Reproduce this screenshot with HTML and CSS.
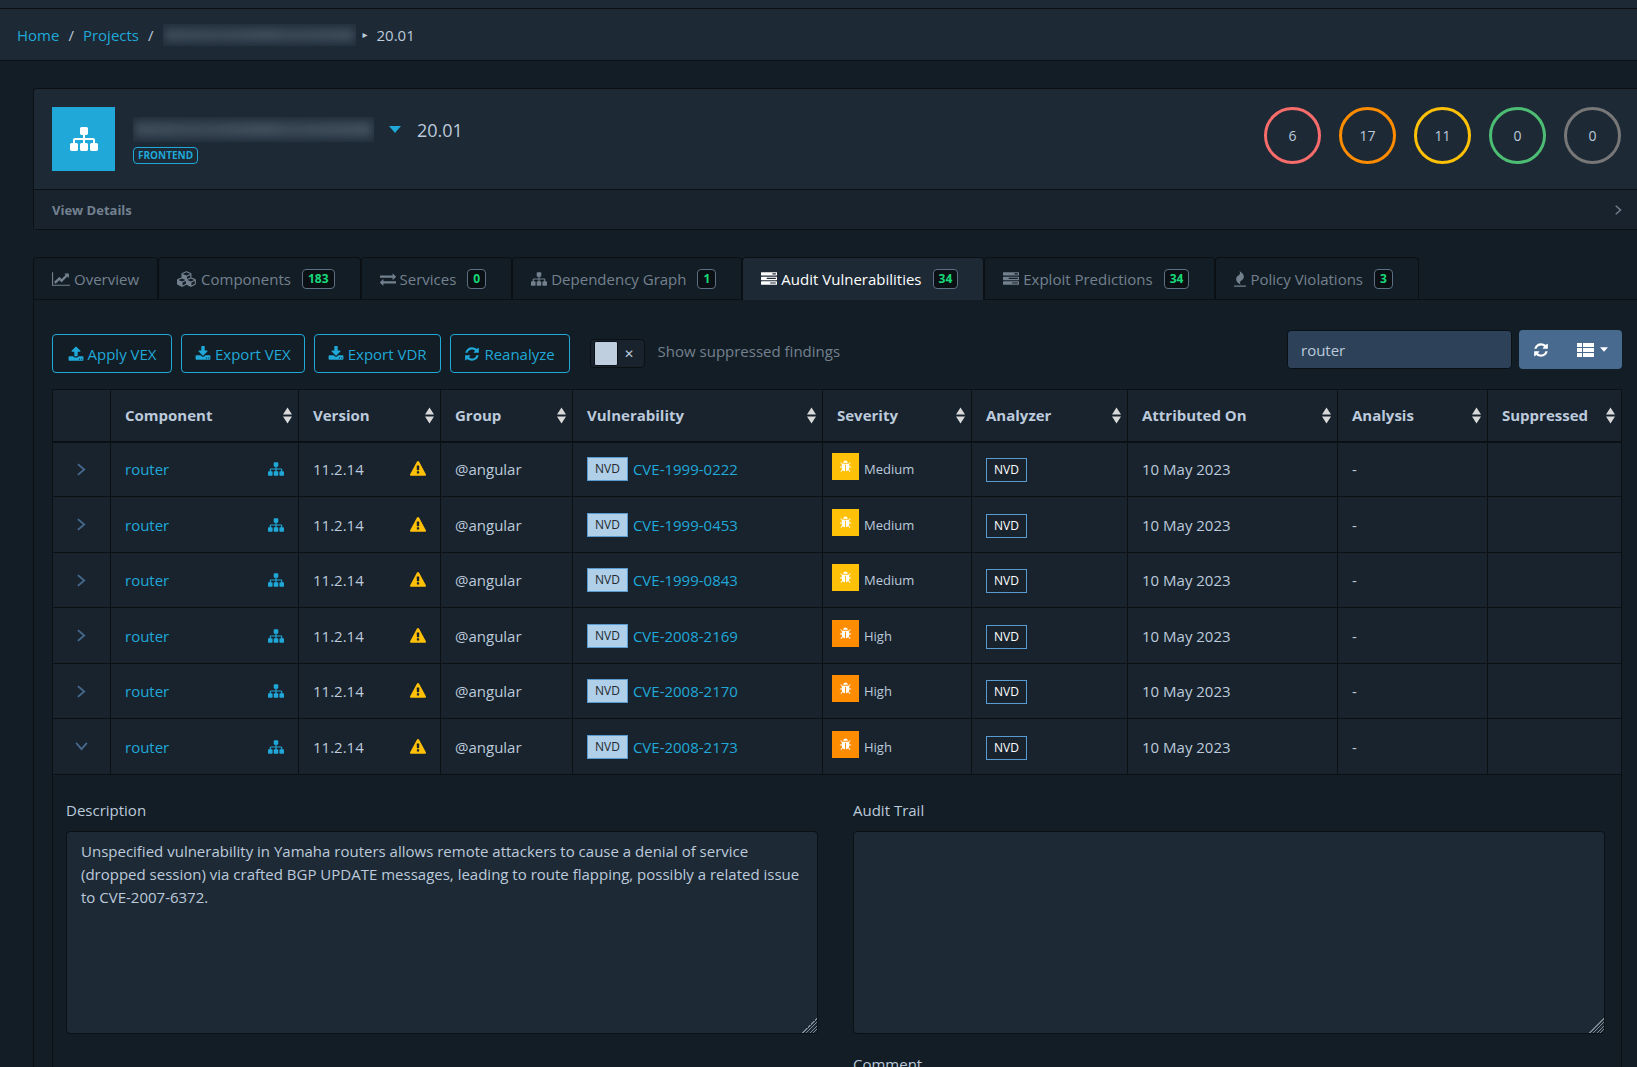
FILE: index.html
```html
<!doctype html>
<html lang="en">
<head>
  <meta charset="utf-8">
  <meta name="viewport" content="width=device-width, initial-scale=1.0">
  <title>Audit Vulnerabilities</title>
  <link rel="stylesheet" href="styles.css">
</head>
<body>

<!-- icon set -->
<svg class="sprite" aria-hidden="true">
  <symbol id="i-sitemap" viewBox="0 0 1792 1792"><path d="M1792 1248v320q0 40-28 68t-68 28h-320q-40 0-68-28t-28-68v-320q0-40 28-68t68-28h96v-192h-512v192h96q40 0 68 28t28 68v320q0 40-28 68t-68 28h-320q-40 0-68-28t-28-68v-320q0-40 28-68t68-28h96v-192h-512v192h96q40 0 68 28t28 68v320q0 40-28 68t-68 28h-320q-40 0-68-28t-28-68v-320q0-40 28-68t68-28h96v-192q0-52 38-90t90-38h512v-192h-96q-40 0-68-28t-28-68v-320q0-40 28-68t68-28h320q40 0 68 28t28 68v320q0 40-28 68t-68 28h-96v192h512q52 0 90 38t38 90v192h96q40 0 68 28t28 68z"/></symbol>
  <symbol id="i-chart" viewBox="0 0 2048 1792"><path d="M2048 1536v128h-2048v-1536h128v1408h1920zm-128-1248v435q0 21-19.5 29.5t-35.5-7.5l-121-121-633 633q-10 10-23 10t-23-10l-233-233-416 416-192-192 585-585q10-10 23-10t23 10l233 233 464-464-121-121q-16-16-7.5-35.5t29.5-19.5h435q14 0 23 9t9 23z"/></symbol>
  <symbol id="i-cubes" viewBox="0 0 2304 1792"><path d="M640 1632l384-192v-314l-384 164v342zm-64-454l404-173-404-173-404 173zm1088 454l384-192v-314l-384 164v342zm-64-454l404-173-404-173-404 173zm-448-293l384-165v-266l-384 164v267zm-64-379l441-189-441-189-441 189zm1088 518v416q0 36-19 67t-52 47l-448 224q-25 14-57 14t-57-14l-448-224q-4-2-7-4-2 2-7 4l-448 224q-25 14-57 14t-57-14l-448-224q-33-16-52-47t-19-67v-416q0-38 21.5-70t56.5-48l434-186v-400q0-38 21.5-70t56.5-48l448-192q23-10 50-10t50 10l448 192q35 16 56.5 48t21.5 70v400l434 186q36 16 57 48t21 70z"/></symbol>
  <symbol id="i-exchange" viewBox="0 0 1792 1792"><path d="M1792 1184v192q0 13-9.5 22.5t-22.5 9.5h-1376v192q0 13-9.5 22.5t-22.5 9.5q-12 0-24-10l-319-320q-9-9-9-22 0-14 9-23l320-320q9-9 23-9 13 0 22.5 9.5t9.5 22.5v192h1376q13 0 22.5 9.5t9.5 22.5zm0-544q0 14-9 23l-320 320q-9 9-23 9-13 0-22.5-9.5t-9.5-22.5v-192h-1376q-13 0-22.5-9.5t-9.5-22.5v-192q0-13 9.5-22.5t22.5-9.5h1376v-192q0-14 9-23t23-9q12 0 24 10l319 319q9 9 9 23z"/></symbol>
  <symbol id="i-tasks" viewBox="0 0 1792 1792"><path d="M1024 1408h640v-128h-640v128zm-384-512h1024v-128h-1024v128zm640-512h384v-128h-384v128zm512 832v256q0 26-19 45t-45 19h-1664q-26 0-45-19t-19-45v-256q0-26 19-45t45-19h1664q26 0 45 19t19 45zm0-512v256q0 26-19 45t-45 19h-1664q-26 0-45-19t-19-45v-256q0-26 19-45t45-19h1664q26 0 45 19t19 45zm0-512v256q0 26-19 45t-45 19h-1664q-26 0-45-19t-19-45v-256q0-26 19-45t45-19h1664q26 0 45 19t19 45z"/></symbol>
  <symbol id="i-fire" viewBox="192 0 1408 1792"><path d="M1600 1696v64q0 13-9.5 22.5t-22.5 9.5h-1344q-13 0-22.5-9.5t-9.5-22.5v-64q0-13 9.5-22.5t22.5-9.5h1344q13 0 22.5 9.5t9.5 22.5zm-256-1056q0 78-24.5 144t-64 112.5-87.5 88-96 77.5-87.5 72-64 81.5-24.5 96.5q0 96 67 224l-4-1 1 1q-90-41-160-83t-138.5-100-113.5-122.5-72.5-150.5-27.5-184q0-78 24.5-144t64-112.5 87.5-88 96-77.5 87.5-72 64-81.5 24.5-96.5q0-94-66-224l3 1-1-1q90 41 160 83t138.5 100 113.5 122.5 72.5 150.5 27.5 184z"/></symbol>
  <symbol id="i-upload" viewBox="64 0 1664 1792"><path d="M1344 1472q0-26-19-45t-45-19-45 19-19 45 19 45 45 19 45-19 19-45zm256 0q0-26-19-45t-45-19-45 19-19 45 19 45 45 19 45-19 19-45zm128-224v320q0 40-28 68t-68 28h-1472q-40 0-68-28t-28-68v-320q0-40 28-68t68-28h427q21 56 70.5 92t110.5 36h256q61 0 110.5-36t70.5-92h427q40 0 68 28t28 68zm-325-648q-17 40-59 40h-256v448q0 26-19 45t-45 19h-256q-26 0-45-19t-19-45v-448h-256q-42 0-59-40-17-39 14-69l448-448q18-19 45-19t45 19l448 448q31 30 14 69z"/></symbol>
  <symbol id="i-download" viewBox="64 0 1664 1792"><path d="M1344 1344q0-26-19-45t-45-19-45 19-19 45 19 45 45 19 45-19 19-45zm256 0q0-26-19-45t-45-19-45 19-19 45 19 45 45 19 45-19 19-45zm128-224v320q0 40-28 68t-68 28h-1472q-40 0-68-28t-28-68v-320q0-40 28-68t68-28h465l135 136q58 56 136 56t136-56l136-136h464q40 0 68 28t28 68zm-325-569q17 41-14 70l-448 448q-18 19-45 19t-45-19l-448-448q-31-29-14-70 17-39 59-39h256v-448q0-26 19-45t45-19h256q26 0 45 19t19 45v448h256q42 0 59 39z"/></symbol>
  <symbol id="i-refresh" viewBox="128 0 1536 1792"><path d="M1639 1056q0 5-1 7-64 268-268 434.5t-478 166.5q-146 0-282.5-55t-243.5-157l-129 129q-19 19-45 19t-45-19-19-45v-448q0-26 19-45t45-19h448q26 0 45 19t19 45-19 45l-137 137q71 66 161 102t187 36q134 0 250-65t186-179q11-17 53-117 8-23 30-23h192q13 0 22.5 9.5t9.5 22.5zm25-800v448q0 26-19 45t-45 19h-448q-26 0-45-19t-19-45 19-45l138-138q-148-137-349-137-134 0-250 65t-186 179q-11 17-53 117-8 23-30 23h-199q-13 0-22.5-9.5t-9.5-22.5v-7q65-268 270-434.5t480-166.5q146 0 284 55.5t245 156.5l130-129q19-19 45-19t45 19 19 45z"/></symbol>
  <symbol id="i-list" viewBox="0 0 17 16"><path d="M0 1h5v4H0zM6 1h11v4H6zM0 6h5v4H0zM6 6h11v4H6zM0 11h5v4H0zM6 11h11v4H6z"/></symbol>
  <symbol id="i-warning" viewBox="0 0 1792 1792"><path d="M1024 1375v-190q0-14-9.5-23.5t-22.5-9.5h-192q-13 0-22.5 9.5t-9.5 23.5v190q0 14 9.5 23.5t22.5 9.5h192q13 0 22.5-9.5t9.5-23.5zm-2-374l18-459q0-12-10-19-13-11-24-11h-220q-11 0-24 11-10 7-10 21l17 457q0 10 10 16.5t24 6.5h185q14 0 23.5-6.5t10.5-16.5zm-14-934l768 1408q35 63-2 126-17 29-46.5 46t-63.5 17h-1536q-34 0-63.5-17t-46.5-46q-37-63-2-126l768-1408q17-31 47-49t65-18 65 18 47 49z"/></symbol>
  <symbol id="i-bug" viewBox="0 0 1792 1792"><path d="M1696 960q0 26-19 45t-45 19h-224q0 171-67 290l208 209q19 19 19 45t-19 45q-18 19-45 19t-45-19l-198-197q-5 5-15 13t-42 28.5-65 36.5-82 29-97 13v-896h-128v896q-51 0-101.5-13.5t-87-33-66-39-43.5-32.5l-15-14-183 207q-20 21-48 21-24 0-43-16-19-18-20.5-44.5t15.5-46.5l202-227q-58-114-58-274h-224q-26 0-45-19t-19-45 19-45 45-19h224v-294l-173-173q-19-19-19-45t19-45 45-19 45 19l173 173h844l173-173q19-19 45-19t45 19 19 45-19 45l-173 173v294h224q26 0 45 19t19 45zm-480-576h-640q0-133 93.5-226.5t226.5-93.5 226.5 93.5 93.5 226.5z"/></symbol>
  <symbol id="i-right" viewBox="0 0 10 14"><path d="M1 1l7 6-7 6" fill="none" stroke="currentColor" stroke-width="2"/></symbol>
  <symbol id="i-down" viewBox="0 0 14 10"><path d="M1 1l6 7 6-7" fill="none" stroke="currentColor" stroke-width="2"/></symbol>
  <symbol id="i-sort" viewBox="0 0 10 18"><path d="M5 0l5 8H0zM5 18l5-8H0z"/></symbol>
  <symbol id="i-caret" viewBox="0 0 12 7"><path d="M0 0h12L6 7z"/></symbol>
</svg>

<header class="topbar"></header>

<nav class="breadcrumb" aria-label="Breadcrumb">
  <a href="#">Home</a>
  <span>/</span>
  <a href="#">Projects</a>
  <span>/</span>
  <span class="redacted"></span>
  <span class="arrow">&#9656;</span>
  <span>20.01</span>
</nav>

<main class="main">
  <section class="card">
    <div class="card-body">
      <div class="project-icon"><svg class="icon-lg"><use href="#i-sitemap"/></svg></div>
      <div class="project">
        <div class="project-title">
          <span class="redacted redacted-lg"></span>
          <button class="version-btn" aria-label="Select version"><svg class="icon-caret"><use href="#i-caret"/></svg></button>
          <span>20.01</span>
        </div>
        <a href="#" class="tag">FRONTEND</a>
      </div>
      <div class="counters">
        <span class="counter critical">6</span>
        <span class="counter high">17</span>
        <span class="counter medium">11</span>
        <span class="counter low">0</span>
        <span class="counter unassigned">0</span>
      </div>
    </div>
    <a href="#" class="card-footer">View Details <svg class="icon-more"><use href="#i-right"/></svg></a>
  </section>

  <ul class="tabs">
    <li><a href="#" class="tab"><svg class="icon-chart"><use href="#i-chart"/></svg>Overview</a></li>
    <li><a href="#" class="tab"><svg class="icon-wide"><use href="#i-cubes"/></svg>Components<span class="badge">183</span></a></li>
    <li><a href="#" class="tab"><svg class="icon"><use href="#i-exchange"/></svg>Services<span class="badge">0</span></a></li>
    <li><a href="#" class="tab"><svg class="icon"><use href="#i-sitemap"/></svg>Dependency Graph<span class="badge">1</span></a></li>
    <li><a href="#" class="tab active"><svg class="icon"><use href="#i-tasks"/></svg>Audit Vulnerabilities<span class="badge">34</span></a></li>
    <li><a href="#" class="tab"><svg class="icon"><use href="#i-tasks"/></svg>Exploit Predictions<span class="badge">34</span></a></li>
    <li><a href="#" class="tab"><svg class="icon-narrow"><use href="#i-fire"/></svg>Policy Violations<span class="badge">3</span></a></li>
  </ul>

  <section class="tab-content">
    <div class="toolbar">
      <button class="btn"><svg class="icon"><use href="#i-upload"/></svg>Apply VEX</button>
      <button class="btn"><svg class="icon"><use href="#i-download"/></svg>Export VEX</button>
      <button class="btn"><svg class="icon"><use href="#i-download"/></svg>Export VDR</button>
      <button class="btn"><svg class="icon"><use href="#i-refresh"/></svg>Reanalyze</button>
      <input type="checkbox" class="switch" id="suppressed">
      <label for="suppressed" class="switch-label">Show suppressed findings</label>
      <input type="text" class="search" value="router" aria-label="Search">
      <div class="btn-group">
        <button class="btn-solid" aria-label="Refresh"><svg class="icon"><use href="#i-refresh"/></svg></button>
        <button class="btn-solid" aria-label="Columns"><svg class="icon-list"><use href="#i-list"/></svg><svg class="icon-drop"><use href="#i-caret"/></svg></button>
      </div>
    </div>

    <table class="findings">
      <colgroup>
        <col class="c-toggle">
        <col class="c-component">
        <col class="c-version">
        <col class="c-group">
        <col class="c-vuln">
        <col class="c-severity">
        <col class="c-analyzer">
        <col class="c-date">
        <col class="c-analysis">
        <col class="c-suppressed">
      </colgroup>
      <thead>
        <tr>
          <th></th>
          <th><div class="th">Component<svg class="icon-sort"><use href="#i-sort"/></svg></div></th>
          <th><div class="th">Version<svg class="icon-sort"><use href="#i-sort"/></svg></div></th>
          <th><div class="th">Group<svg class="icon-sort"><use href="#i-sort"/></svg></div></th>
          <th><div class="th">Vulnerability<svg class="icon-sort"><use href="#i-sort"/></svg></div></th>
          <th><div class="th">Severity<svg class="icon-sort"><use href="#i-sort"/></svg></div></th>
          <th><div class="th">Analyzer<svg class="icon-sort"><use href="#i-sort"/></svg></div></th>
          <th><div class="th">Attributed On<svg class="icon-sort"><use href="#i-sort"/></svg></div></th>
          <th><div class="th">Analysis<svg class="icon-sort"><use href="#i-sort"/></svg></div></th>
          <th><div class="th">Suppressed<svg class="icon-sort"><use href="#i-sort"/></svg></div></th>
        </tr>
      </thead>
      <tbody>
        <tr>
          <td class="toggle"><button class="expand" aria-label="Expand"><svg class="icon-arrow"><use href="#i-right"/></svg></button></td>
          <td><div class="split"><a href="#">router</a><svg class="icon link"><use href="#i-sitemap"/></svg></div></td>
          <td><div class="split">11.2.14<svg class="icon warn"><use href="#i-warning"/></svg></div></td>
          <td>@angular</td>
          <td><div class="vuln"><span class="source">NVD</span><a href="#">CVE-1999-0222</a></div></td>
          <td class="severity"><div class="sev"><span class="sev-icon bg-medium"><svg class="icon-bug"><use href="#i-bug"/></svg></span>Medium</div></td>
          <td><span class="analyzer">NVD</span></td>
          <td>10 May 2023</td>
          <td>-</td>
          <td></td>
        </tr>
        <tr>
          <td class="toggle"><button class="expand" aria-label="Expand"><svg class="icon-arrow"><use href="#i-right"/></svg></button></td>
          <td><div class="split"><a href="#">router</a><svg class="icon link"><use href="#i-sitemap"/></svg></div></td>
          <td><div class="split">11.2.14<svg class="icon warn"><use href="#i-warning"/></svg></div></td>
          <td>@angular</td>
          <td><div class="vuln"><span class="source">NVD</span><a href="#">CVE-1999-0453</a></div></td>
          <td class="severity"><div class="sev"><span class="sev-icon bg-medium"><svg class="icon-bug"><use href="#i-bug"/></svg></span>Medium</div></td>
          <td><span class="analyzer">NVD</span></td>
          <td>10 May 2023</td>
          <td>-</td>
          <td></td>
        </tr>
        <tr>
          <td class="toggle"><button class="expand" aria-label="Expand"><svg class="icon-arrow"><use href="#i-right"/></svg></button></td>
          <td><div class="split"><a href="#">router</a><svg class="icon link"><use href="#i-sitemap"/></svg></div></td>
          <td><div class="split">11.2.14<svg class="icon warn"><use href="#i-warning"/></svg></div></td>
          <td>@angular</td>
          <td><div class="vuln"><span class="source">NVD</span><a href="#">CVE-1999-0843</a></div></td>
          <td class="severity"><div class="sev"><span class="sev-icon bg-medium"><svg class="icon-bug"><use href="#i-bug"/></svg></span>Medium</div></td>
          <td><span class="analyzer">NVD</span></td>
          <td>10 May 2023</td>
          <td>-</td>
          <td></td>
        </tr>
        <tr>
          <td class="toggle"><button class="expand" aria-label="Expand"><svg class="icon-arrow"><use href="#i-right"/></svg></button></td>
          <td><div class="split"><a href="#">router</a><svg class="icon link"><use href="#i-sitemap"/></svg></div></td>
          <td><div class="split">11.2.14<svg class="icon warn"><use href="#i-warning"/></svg></div></td>
          <td>@angular</td>
          <td><div class="vuln"><span class="source">NVD</span><a href="#">CVE-2008-2169</a></div></td>
          <td class="severity"><div class="sev"><span class="sev-icon bg-high"><svg class="icon-bug"><use href="#i-bug"/></svg></span>High</div></td>
          <td><span class="analyzer">NVD</span></td>
          <td>10 May 2023</td>
          <td>-</td>
          <td></td>
        </tr>
        <tr>
          <td class="toggle"><button class="expand" aria-label="Expand"><svg class="icon-arrow"><use href="#i-right"/></svg></button></td>
          <td><div class="split"><a href="#">router</a><svg class="icon link"><use href="#i-sitemap"/></svg></div></td>
          <td><div class="split">11.2.14<svg class="icon warn"><use href="#i-warning"/></svg></div></td>
          <td>@angular</td>
          <td><div class="vuln"><span class="source">NVD</span><a href="#">CVE-2008-2170</a></div></td>
          <td class="severity"><div class="sev"><span class="sev-icon bg-high"><svg class="icon-bug"><use href="#i-bug"/></svg></span>High</div></td>
          <td><span class="analyzer">NVD</span></td>
          <td>10 May 2023</td>
          <td>-</td>
          <td></td>
        </tr>
        <tr>
          <td class="toggle"><button class="expand" aria-label="Collapse"><svg class="icon-open"><use href="#i-down"/></svg></button></td>
          <td><div class="split"><a href="#">router</a><svg class="icon link"><use href="#i-sitemap"/></svg></div></td>
          <td><div class="split">11.2.14<svg class="icon warn"><use href="#i-warning"/></svg></div></td>
          <td>@angular</td>
          <td><div class="vuln"><span class="source">NVD</span><a href="#">CVE-2008-2173</a></div></td>
          <td class="severity"><div class="sev"><span class="sev-icon bg-high"><svg class="icon-bug"><use href="#i-bug"/></svg></span>High</div></td>
          <td><span class="analyzer">NVD</span></td>
          <td>10 May 2023</td>
          <td>-</td>
          <td></td>
        </tr>
        <tr class="detail">
          <td colspan="10">
            <div class="detail-grid">
              <div class="field">
                <label for="description">Description</label>
                <textarea id="description" readonly>Unspecified vulnerability in Yamaha routers allows remote attackers to cause a denial of service (dropped session) via crafted BGP UPDATE messages, leading to route flapping, possibly a related issue to CVE-2007-6372.</textarea>
              </div>
              <div class="field">
                <label for="trail">Audit Trail</label>
                <textarea id="trail" readonly></textarea>
                <label for="comment">Comment</label>
                <textarea id="comment"></textarea>
              </div>
            </div>
          </td>
        </tr>
      </tbody>
    </table>
  </section>
</main>

</body>
</html>
```
FILE: styles.css
```css
* {
    box-sizing: border-box;
}
html {
    height: 100%;
    overflow: hidden;
}
body {
    margin: 0;
    height: 100%;
    overflow: hidden;
    background: #131d25;
    color: #bccadb;
    font-family: "Open Sans", "Noto Sans", sans-serif;
    font-size: 15px;
    line-height: 24px;
}
a {
    color: #20a8d8;
    text-decoration: none;
}
button, input, textarea {
    font: inherit;
    color: inherit;
}
button {
    cursor: pointer;
}
svg {
    fill: currentColor;
    flex: none;
}

.sprite { position: absolute; width: 0; height: 0; }
.icon { width: 16px; height: 16px; }
.icon-chart { width: 18px; height: 16px; }
.icon-wide { width: 20px; height: 16px; }
.icon-narrow { width: 12px; height: 16px; }
.icon-lg { width: 28px; height: 28px; }
.icon-list { width: 17px; height: 16px; }
.icon-caret { width: 12px; height: 7px; }
.icon-drop { width: 8px; height: 5px; }
.icon-sort { width: 9px; height: 17px; color: #d9d9d9; }
.icon-bug { width: 13px; height: 13px; }
.icon-arrow { width: 9px; height: 13px; }
.icon-more { width: 7px; height: 10px; }
.icon-open { width: 13px; height: 9px; }
.link { color: #20a8d8; }
.warn { color: #ffc107; }

/* header */
.topbar {
    height: 9px;
    background: #1d2935;
    border-bottom: 1px solid #0b1015;
}
.breadcrumb {
    display: flex;
    align-items: center;
    gap: 9px;
    height: 52px;
    padding: 0 17px;
    background: #1d2935;
    border-bottom: 1px solid #0b1015;
}
.breadcrumb .arrow {
    width: 6px;
    margin: 0 -1px 0 -2px;
    font-family: "DejaVu Sans", sans-serif;
    font-size: 10px;
}
.redacted {
    display: inline-block;
    overflow: hidden;
    width: 193px;
    height: 22px;
    background: #222f3b;
}
.redacted::before {
    content: "";
    display: block;
    height: 12px;
    margin: 5px 2px;
    background: linear-gradient(90deg, #3f4c5a, #3a4755 30%, #414e5c 55%, #3a4755 65%, #414e5c);
    filter: blur(4px);
}
.redacted-lg { width: 241px; height: 25px; }
.redacted-lg::before { height: 15px; }

.main {
    padding: 27px 0 0 33px;
}

/* project card */
.card {
    border: 1px solid #0b1015;
    border-right: 0;
    border-radius: 4px 0 0 4px;
    background: #1d2935;
}
.card-body {
    display: flex;
    padding: 18px 16px 18px 18px;
}
.project-icon {
    display: flex;
    align-items: center;
    justify-content: center;
    width: 63px;
    height: 64px;
    background: #20a8d8;
    color: #fff;
}
.project {
    flex: 1;
    padding: 10px 0 0 18px;
}
.project-title {
    display: flex;
    align-items: center;
    height: 25px;
    font-size: 18px;
}
.version-btn {
    display: flex;
    padding: 8px 16px 8px 15px;
    border: 0;
    background: none;
    color: #20a8d8;
}
.tag {
    display: block;
    width: max-content;
    margin-top: 5px;
    padding: 0 4px;
    border: 1px solid #20a8d8;
    border-radius: 4px;
    font-size: 10px;
    font-weight: bold;
    line-height: 15px;
}
.counters {
    display: flex;
    gap: 18px;
}
.counter {
    display: flex;
    align-items: center;
    justify-content: center;
    width: 57px;
    height: 57px;
    border: 3px solid;
    border-radius: 50%;
    font-size: 14px;
}
.critical { border-color: #f86c6b; }
.high { border-color: #fd8c00; }
.medium { border-color: #ffc107; }
.low { border-color: #4dbd74; }
.unassigned { border-color: #777; }
.card-footer {
    display: flex;
    align-items: center;
    justify-content: space-between;
    height: 40px;
    padding: 0 15px 0 18px;
    border-top: 1px solid #0b1015;
    background: #18232e;
    color: #73818f;
    font-size: 13px;
    font-weight: bold;
}

/* tabs */
.tabs {
    display: flex;
    margin: 27px 0 0;
    padding: 0;
    list-style: none;
    border-bottom: 1px solid #0b1015;
}
.tab {
    display: flex;
    align-items: center;
    gap: 4px;
    height: 42px;
    padding: 0 18px;
    border: 1px solid #0b1015;
    border-bottom: 0;
    border-radius: 4px 4px 0 0;
    color: #73818f;
}
.tab.active {
    margin-bottom: -1px;
    height: 43px;
    background: #1d2935;
    color: #fff;
}
.badge {
    margin: 0 7px;
    padding: 0 5px;
    border: 1px solid #5c6f85;
    border-radius: 4px;
    background: #0b1015;
    color: #17d878;
    font-size: 12px;
    font-weight: bold;
    line-height: 18px;
}

.tab-content {
    padding: 30px 15px 0 18px;
    border-left: 1px solid #0b1015;
}

/* toolbar */
.toolbar {
    display: flex;
    align-items: flex-start;
    gap: 9px;
    margin-bottom: 16px;
}
.btn {
    display: flex;
    align-items: center;
    justify-content: center;
    gap: 4px;
    min-width: 120px;
    height: 39px;
    margin-top: 4px;
    padding: 0 13px;
    border: 1px solid #20a8d8;
    border-radius: 4px;
    background: none;
    color: #20a8d8;
}
.switch {
    appearance: none;
    display: flex;
    align-items: center;
    width: 55px;
    height: 29px;
    margin: 9px 4px 0 11px;
    padding: 3px;
    border: 1px solid #0b1015;
    border-radius: 4px;
    background: #18232e;
}
.switch::before {
    content: "";
    width: 22px;
    height: 23px;
    border: 1px solid #0b1015;
    border-radius: 2px;
    background: #c0cfe0;
}
.switch::after {
    content: "\2715";
    flex: 1;
    text-align: center;
    font-family: "DejaVu Sans", sans-serif;
    font-size: 12px;
}
.switch-label {
    flex: 1;
    margin-top: 9px;
    color: #73818f;
}
.search {
    width: 225px;
    height: 39px;
    margin-right: -2px;
    padding: 0 13px;
    border: 1px solid #0b1015;
    border-radius: 4px;
    background: #2d4259;
    outline: 0;
}
.btn-group {
    display: flex;
    border-radius: 4px;
    background: #486a8e;
}
.btn-solid {
    display: flex;
    align-items: center;
    gap: 6px;
    height: 39px;
    padding: 0 14px;
    border: 0;
    background: none;
    color: #fff;
}

/* findings */
.findings {
    width: 100%;
    table-layout: fixed;
    border-collapse: collapse;
}
.c-toggle { width: 58px; }
.c-component { width: 188px; }
.c-version { width: 142px; }
.c-group { width: 132px; }
.c-vuln { width: 250px; }
.c-severity { width: 149px; }
.c-analyzer { width: 156px; }
.c-date { width: 210px; }
.c-analysis { width: 150px; }
.c-suppressed { width: 134px; }
.findings th,
.findings td {
    height: 55px;
    padding: 0 14px;
    border: 1px solid #0b1015;
    background: #18232e;
    text-align: left;
}
.findings th {
    height: 52px;
    padding-right: 6px;
    border-bottom-width: 2px;
}
.findings tr:nth-child(even) td {
    height: 56px;
}
.th,
.split {
    display: flex;
    align-items: center;
    justify-content: space-between;
}
.findings .toggle {
    padding: 0;
}
.expand {
    display: flex;
    margin: 0 auto;
    padding: 4px;
    border: 0;
    background: none;
    color: #486a8e;
}
.vuln,
.sev {
    display: flex;
    align-items: center;
    gap: 5px;
}
.source,
.analyzer {
    display: inline-block;
    padding: 0 7px;
    border: 1px solid #589bd0;
    font-size: 12px;
    line-height: 22px;
}
.source {
    background: #b0cfe8;
    color: #23282c;
}
.analyzer {
    color: #fff;
}
.findings .severity {
    padding-left: 9px;
}
.sev {
    font-size: 13px;
}
.sev-icon {
    display: flex;
    align-items: center;
    justify-content: center;
    width: 27px;
    height: 27px;
    margin-bottom: 5px;
    color: #fff;
}
.bg-medium { background: #ffc107; }
.bg-high { background: #fd8c00; }

/* expanded row */
.findings .detail td {
    height: auto;
    padding: 23px 16px 23px 13px;
    background: #131d25;
}
.detail-grid {
    display: grid;
    grid-template-columns: 1fr 1fr;
    gap: 35px;
}
.field label {
    display: block;
    margin-bottom: 9px;
}
.field textarea {
    display: block;
    width: 100%;
    height: 203px;
    margin-bottom: 18px;
    padding: 8px 14px;
    border: 1px solid #0b1015;
    border-radius: 4px;
    background: #1d2935;
    line-height: 23px;
    outline: 0;
    resize: both;
}
.field textarea::-webkit-scrollbar {
    width: 17px;
    height: 17px;
}
.field textarea::-webkit-resizer {
    background: linear-gradient(135deg, transparent 50%, #7d8892 50% 54%, transparent 54% 62%, #7d8892 62% 66%, transparent 66% 74%, #7d8892 74% 78%, transparent 78% 86%, #7d8892 86% 90%, transparent 90%);
}
```
